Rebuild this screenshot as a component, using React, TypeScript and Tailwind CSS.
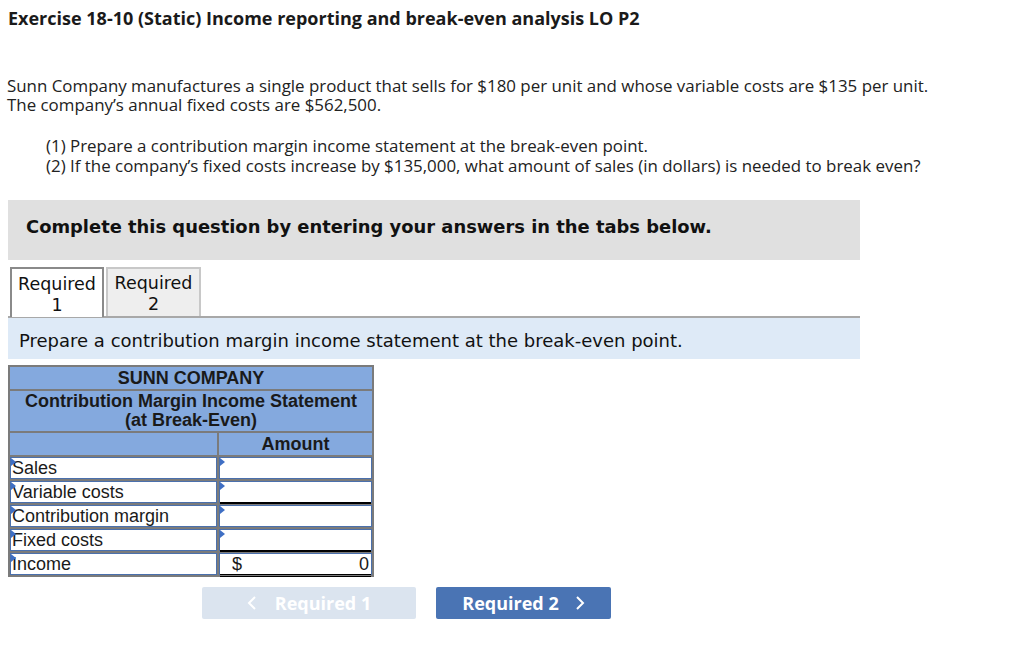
import React from "react";

const Tri = () => (
  <span className="absolute left-0 top-0 w-0 h-0 border-t-[4px] border-t-transparent border-b-[4px] border-b-transparent border-l-[5px] border-l-[#3f6fc4]" />
);

type Row = { label: string; under?: "single" | "double"; value?: boolean };

const rows: Row[] = [
  { label: "Sales" },
  { label: "Variable costs", under: "single" },
  { label: "Contribution margin" },
  { label: "Fixed costs", under: "single" },
  { label: "Income", under: "double", value: true },
];

export default function App() {
  return (
    <div className="w-[1034px] h-[656px] bg-white text-[#222] relative">
      <div className="pl-[8px] pt-[6px] font-['Open_Sans',sans-serif]">
        <h1 className="text-[18px] font-bold leading-[24px] text-[#1a1a1a] tracking-[0px]">
          Exercise 18-10 (Static) Income reporting and break-even analysis LO P2
        </h1>
      </div>
      <div className="pl-[7px] pt-[46px] font-['Open_Sans',sans-serif] text-[16.9px] leading-[19px] text-[#222]">
        <p className="h-[19px] whitespace-nowrap">
          Sunn Company manufactures a single product that sells for $180 per unit and whose variable costs are $135 per unit.
        </p>
        <p className="h-[19px] whitespace-nowrap">The company’s annual fixed costs are $562,500.</p>
        <div className="pl-[39px] pt-[22px] leading-[20px]">
          <p className="h-[20px] whitespace-nowrap">(1) Prepare a contribution margin income statement at the break-even point.</p>
          <p className="h-[20px] whitespace-nowrap">(2) If the company’s fixed costs increase by $135,000, what amount of sales (in dollars) is needed to break even?</p>
        </div>
      </div>

      <div className="ml-[8px] mt-[24px] w-[852px] h-[60px] bg-[#e0e0e0] flex items-center pl-[18px] pb-[6px] font-['DejaVu_Sans',Verdana,sans-serif]">
        <span className="text-[17.9px] font-bold text-[#111]">Complete this question by entering your answers in the tabs below.</span>
      </div>

      <div className="ml-[8px] mt-[7px] w-[852px] font-['DejaVu_Sans',Verdana,sans-serif]">
        <div className="flex items-end pl-[2px] gap-[2px]">
          <div className="w-[94px] h-[50px] border-2 border-b-0 border-[#8a8a8a] bg-white flex flex-col items-center justify-center pt-[3px] text-[17.5px] leading-[21px] text-[#111] -mb-[1px] relative z-10">
            <span>Required</span>
            <span>1</span>
          </div>
          <div className="w-[95px] h-[49px] border-2 border-b-0 border-[#c8c8c8] bg-[#eeeeee] flex flex-col items-center justify-center pt-[3px] text-[17.5px] leading-[21px] text-[#111]">
            <span>Required</span>
            <span>2</span>
          </div>
        </div>
        <div className="border-t-2 border-[#a8a8a8] bg-[#deeaf7] h-[43px] flex items-center pl-[11px] pt-[3px] text-[18px] text-[#111]">
          Prepare a contribution margin income statement at the break-even point.
        </div>
      </div>

      <div className="ml-[8px] mt-[6px] w-[366px] bg-[#7b7b7b] p-[2px] flex flex-col gap-[2px] font-['Liberation_Sans',Arial,sans-serif] text-[18px] text-[#1a1a1a]">
        <div className="h-[22px] bg-[#84a9de] flex items-center justify-center font-bold leading-[18px]">SUNN COMPANY</div>
        <div className="h-[40px] bg-[#84a9de] flex flex-col items-center justify-center font-bold leading-[19px]">
          <span>Contribution Margin Income Statement</span>
          <span>(at Break-Even)</span>
        </div>
        <div className="h-[22px] flex gap-[2px]">
          <div className="w-[207px] bg-[#84a9de]" />
          <div className="w-[153px] bg-[#84a9de] flex items-center justify-center font-bold">Amount</div>
        </div>
        {rows.map((r) => (
          <div key={r.label} className="h-[22px] flex gap-[2px]">
            <div className="w-[207px] bg-white border border-[#4a70ad] relative flex items-center pl-[1px] leading-[18px]">
              <Tri />
              {r.label}
            </div>
            <div className="w-[153px] bg-white border border-[#4a70ad] relative">
              {!r.value && <Tri />}
              {r.value && (
                <div className="absolute inset-0 flex items-center justify-between pl-[12px] pr-[2px] leading-[18px]">
                  <span>$</span>
                  <span>0</span>
                </div>
              )}
              {r.under === "single" && (
                <div className="absolute left-0 right-0 -bottom-[2px] h-[2px] bg-black" />
              )}
              {r.under === "double" && (
                <div className="absolute left-0 right-0 -bottom-[3px] h-[3px] border-t border-b border-black" />
              )}
            </div>
          </div>
        ))}
      </div>

      <div className="ml-[202px] mt-[10px] flex gap-[20px] font-['Open_Sans',sans-serif]">
        <div className="w-[214px] h-[32px] rounded-[2px] bg-[#dbe4ef] flex items-center justify-center gap-[18px] text-white text-[18px] font-bold">
          <svg width="10" height="16" viewBox="0 0 10 16" fill="none"><path d="M8 2 L2 8 L8 14" stroke="white" strokeWidth="2" /></svg>
          <span>Required 1</span>
        </div>
        <div className="w-[175px] h-[32px] rounded-[2px] bg-[#4a74b4] flex items-center justify-center gap-[16px] text-white text-[18px] font-bold">
          <span>Required 2</span>
          <svg width="10" height="16" viewBox="0 0 10 16" fill="none"><path d="M2 2 L8 8 L2 14" stroke="white" strokeWidth="2" /></svg>
        </div>
      </div>
    </div>
  );
}
